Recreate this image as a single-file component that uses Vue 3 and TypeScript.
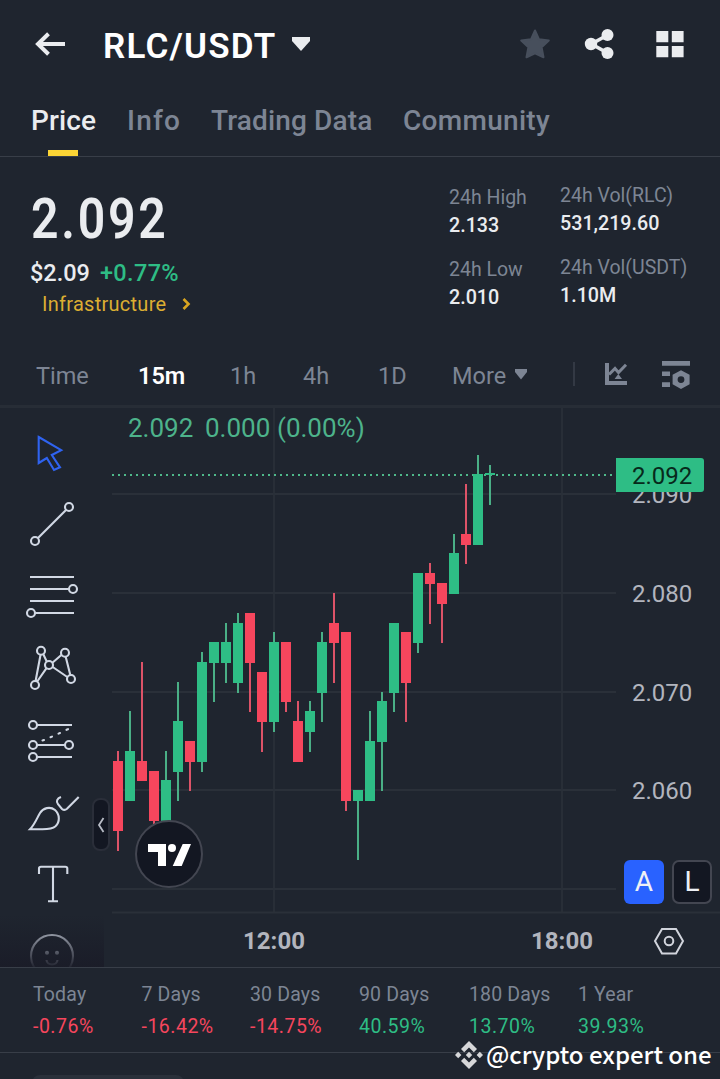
<script setup lang="ts">
interface Candle { x: number; top: number; height: number; wickTop: number; wickHeight: number; up: boolean }

const tabs: string[] = ['Price', 'Info', 'Trading Data', 'Community']
const intervals: string[] = ['Time', '15m', '1h', '4h', '1D']

const stats: { label: string; value: string }[][] = [
  [{ label: '24h High', value: '2.133' }, { label: '24h Low', value: '2.010' }],
  [{ label: '24h Vol(RLC)', value: '531,219.60' }, { label: '24h Vol(USDT)', value: '1.10M' }],
]

const performance: { label: string; value: string }[] = [
  { label: 'Today', value: '-0.76%' },
  { label: '7 Days', value: '-16.42%' },
  { label: '30 Days', value: '-14.75%' },
  { label: '90 Days', value: '40.59%' },
  { label: '180 Days', value: '13.70%' },
  { label: '1 Year', value: '39.93%' },
]

// open, high, low, close in thousandths above 2.000
const ohlc: [number, number, number, number][] = [
  [63, 64, 54, 56], [59, 68, 59, 64], [63, 73, 61, 61], [62, 62, 56, 57],
  [57, 64, 57, 61], [62, 71, 59, 67], [65, 65, 60, 63], [63, 74, 62, 73],
  [73, 75, 69, 75], [73, 77, 71, 75], [71, 78, 70, 77], [78, 78, 68, 73],
  [72, 72, 64, 67], [67, 76, 66, 75], [75, 75, 68, 69], [67, 69, 63, 63],
  [66, 69, 64, 68], [70, 76, 67, 75], [77, 80, 71, 75], [76, 76, 58, 59],
  [59, 60, 53, 60], [59, 68, 59, 65], [65, 70, 60, 69], [70, 77, 68, 77],
  [76, 76, 67, 71], [75, 82, 74, 82], [82, 83, 77, 81], [81, 81, 75, 79],
  [80, 86, 80, 84], [86, 91, 83, 85], [85, 94, 85, 92], [92, 93, 89, 92],
]

const priceY = (p: number): number => Math.round(494.2 + (90 - p) * 9.87)

const candles: Candle[] = ohlc.map(([open, high, low, close], i) => {
  const top = priceY(Math.max(open, close))
  const bottom = priceY(Math.min(open, close)) + 1
  const wickTop = priceY(high)
  return {
    x: 118 + i * 12,
    top: open === close ? top - 1 : top,
    height: Math.max(bottom - top, 2),
    wickTop,
    wickHeight: priceY(low) + 1 - wickTop,
    up: close >= open,
  }
})

const priceLabels: { text: string; y: number }[] = [
  { text: '2.090', y: 503 },
  { text: '2.080', y: 602 },
  { text: '2.070', y: 701 },
  { text: '2.060', y: 799 },
]
const gridRows: number[] = [494, 593, 692, 790, 889]
const gridCols: number[] = [274, 562]
</script>

<template>
  <main class="screen">
    <header class="topbar">
      <svg class="back" width="32" height="24" viewBox="0 0 32 24">
        <path d="M31 12H4M14.5 1.8L4 12L14.5 22.2" fill="none" stroke="#eaecef" stroke-width="4" />
      </svg>
      <h1>RLC/USDT</h1>
      <svg class="caret" width="18" height="14" viewBox="0 0 18 14"><path d="M0 0H18V4L9 14L0 4Z" fill="#eaecef" /></svg>
      <div class="actions">
        <svg width="32" height="32" viewBox="0 0 32 32">
          <path d="M16 2.5L20 11.3L29.8 12.5L22.6 19.2L24.5 29.3L16 25.3L7.5 29.3L9.4 19.2L2.2 12.5L12 11.3Z" fill="#474f5c" stroke="#474f5c" stroke-width="2" stroke-linejoin="round" />
        </svg>
        <svg width="32" height="32" viewBox="0 0 32 32">
          <path d="M24.5 7L8.5 16L24.5 25" fill="none" stroke="#eaecef" stroke-width="3.6" />
          <g fill="#eaecef"><circle cx="24.5" cy="7" r="6" /><circle cx="8" cy="16" r="6.2" /><circle cx="24.5" cy="25" r="6" /></g>
        </svg>
        <svg width="32" height="32" viewBox="0 0 32 32">
          <path d="M2.3 3H14.3V14.3H2.3ZM17.8 3H29.6V14.3H17.8ZM2.3 18H14.3V29.3H2.3ZM17.8 18H29.6V29.3H17.8Z" fill="#eaecef" />
        </svg>
      </div>
    </header>

    <nav class="tabs">
      <span v-for="(tab, i) in tabs" :key="tab" class="tab" :class="{ active: i === 0 }">{{ tab }}</span>
    </nav>

    <section class="ticker">
      <div class="quote">
        <div class="last">2.092</div>
        <div class="fiat"><span>$2.09</span><span class="gain">+0.77%</span></div>
        <div class="tag">
          <span>Infrastructure</span>
          <svg width="9" height="14" viewBox="0 0 9 14"><path d="M1.5 2L6.5 7L1.5 12" fill="none" stroke="#d9a520" stroke-width="2.6" /></svg>
        </div>
      </div>
      <div v-for="(column, c) in stats" :key="c" class="stats">
        <div v-for="stat in column" :key="stat.label" class="stat">
          <span class="muted">{{ stat.label }}</span>
          <span class="value">{{ stat.value }}</span>
        </div>
      </div>
    </section>

    <section class="intervals">
      <span v-for="item in intervals" :key="item" :class="{ active: item === '15m' }">{{ item }}</span>
      <span class="more">More
        <svg width="12" height="11" viewBox="0 0 12 11"><path d="M0 0H12V3L6 10.5L0 3Z" fill="#7d8594" /></svg>
      </span>
      <i class="divider"></i>
      <svg class="indicator" width="24" height="24" viewBox="0 0 24 24">
        <path d="M3 1V21H23" fill="none" stroke="#7d8594" stroke-width="4" />
        <path d="M5 12.5L11 6.5L14.5 10.5L22 2.8" fill="none" stroke="#7d8594" stroke-width="3" />
        <path d="M14.3 12L18 17H10.6Z" fill="#7d8594" />
      </svg>
      <svg class="config" width="28" height="28" viewBox="0 0 28 28">
        <path d="M0 0H28V4.7H0ZM0 10.5H8V15H0ZM0 21.3H8V26H0Z" fill="#7d8594" />
        <path d="M19 9.2L27.6 13.8V23.2L19 28L10.6 23.2V13.8ZM19 15.2A3.4 3.4 0 1 0 19 22A3.4 3.4 0 1 0 19 15.2Z" fill="#7d8594" fill-rule="evenodd" />
      </svg>
    </section>

    <section class="chart">
      <aside class="tools">
        <svg viewBox="0 0 104 72" class="selected"><path d="M38.7 21L61.2 34.2L51.8 39L60 51.3L54 54L46.8 42L38.7 47Z" /></svg>
        <svg viewBox="0 0 104 72"><path d="M66 22L38 50" /><circle cx="69" cy="19" r="4" /><circle cx="35" cy="53" r="4" /></svg>
        <svg viewBox="0 0 104 72"><path d="M30 17H74M30 29H69M30 41H74M35 53H74" /><circle cx="73" cy="29" r="4" /><circle cx="31" cy="53" r="4" /></svg>
        <svg viewBox="0 0 104 72">
          <path d="M40.5 23L35.6 49M43.3 22.2L46.8 29.6M37.2 49.5L46.5 36.2M52.4 30.8L61.6 22.8M52.7 35L67.3 45M65.7 24.7L70.3 43" />
          <circle cx="41" cy="18.7" r="4" /><circle cx="65" cy="20.7" r="4" /><circle cx="49" cy="33" r="4" /><circle cx="35" cy="53" r="4" /><circle cx="71" cy="47" r="4" />
        </svg>
        <svg viewBox="0 0 104 72">
          <path d="M37 21H72M37 41H65M37 53H72" />
          <circle cx="33" cy="21" r="4" /><circle cx="33" cy="41" r="4" /><circle cx="69" cy="41" r="4" /><circle cx="33" cy="53" r="4" />
          <path d="M42.5 36.5L44 36M50.5 33.2L52 32.6M58.5 29.6L60 29M66.5 25.8L68 25.2" stroke-linecap="round" />
        </svg>
        <svg viewBox="0 0 104 72">
          <path d="M30 53.3C35 48 37 42 40 37C43 32 50 30 55 34C60 38.5 60 46 55.5 50.3C52 53.4 47 53.3 42 53.3Z" />
          <path d="M61 21C57 22.5 55.8 25.5 58 28.2L62 33Q64.5 35 67 32.8L78.7 21" />
        </svg>
        <svg viewBox="0 0 104 72"><path d="M39 26V20.5Q39 18.7 41 18.7H65.3Q67.3 18.7 67.3 20.5V26M53 18.7V53M48 53.3H58" /></svg>
        <svg viewBox="0 0 104 72">
          <circle cx="52" cy="36" r="21" /><path d="M46.5 40Q47 44.5 52 44.5Q57 44.5 57.5 40" />
          <circle cx="47" cy="32.7" r="1" /><circle cx="57" cy="32.7" r="1" />
        </svg>
      </aside>

      <svg class="plot" width="616" height="559" viewBox="104 408 616 559">
        <g stroke="#2a3039" stroke-width="1.8">
          <line v-for="y in gridRows" :key="y" x1="112" x2="616" :y1="y" :y2="y" />
          <line v-for="x in gridCols" :key="x" :x1="x" :x2="x" y1="405" y2="912" />
          <line x1="112" x2="720" y1="912.5" y2="912.5" />
        </g>
        <line x1="112" x2="614" y1="475" y2="475" stroke="#4fb98b" stroke-width="2" stroke-dasharray="2 4" />
        <g v-for="candle in candles" :key="candle.x" :class="candle.up ? 'up' : 'down'">
          <rect class="wick" :x="candle.x - 1" :y="candle.wickTop" width="2" :height="candle.wickHeight" />
          <rect :x="candle.x - 5" :y="candle.top" width="10" :height="candle.height" />
        </g>
        <g class="legend">
          <text x="128" y="437">2.092</text>
          <text x="205" y="437">0.000</text>
          <text x="277" y="437">(0.00%)</text>
        </g>
        <g class="axis">
          <text v-for="label in priceLabels" :key="label.text" x="632" :y="label.y">{{ label.text }}</text>
        </g>
        <path d="M616 458H701Q704 458 704 461V489Q704 492 701 492H616Z" fill="#2ebd85" />
        <text class="current" x="632" y="484">2.092</text>
        <g class="time">
          <text x="274" y="949">12:00</text>
          <text x="562" y="949">18:00</text>
        </g>
        <rect x="624" y="860" width="40" height="44" rx="6" fill="#2962ff" />
        <rect x="673" y="861" width="38" height="42" rx="6" fill="#131722" stroke="#434651" stroke-width="2" />
        <g class="mode"><text x="644" y="891">A</text><text x="692" y="891">L</text></g>
        <g fill="none" stroke="#d1d4dc" stroke-width="2">
          <path d="M655 941L662 929H676L683 941L676 953.5H662Z" /><circle cx="669" cy="941" r="4.3" />
        </g>
        <circle cx="169" cy="854" r="33" fill="#131722" stroke="#434651" stroke-width="2" />
        <path d="M148 844H166V866H158V852H148ZM182.7 844H191L181.7 866H172.7Z" fill="#fff" />
        <circle cx="172" cy="848" r="4" fill="#fff" />
      </svg>

      <button class="collapse" aria-label="Collapse tools">
        <svg width="8" height="16" viewBox="0 0 8 16"><path d="M6.5 1L2 8L6.5 15" fill="none" stroke="#b8bcc6" stroke-width="1.8" /></svg>
      </button>
    </section>

    <section class="performance">
      <div v-for="item in performance" :key="item.label">
        <span class="muted">{{ item.label }}</span>
        <span :class="item.value.startsWith('-') ? 'loss' : 'gain'">{{ item.value }}</span>
      </div>
    </section>

    <footer><i></i></footer>

    <div class="watermark">
      <svg width="28" height="28" viewBox="0 0 28 28" fill="#d6d7d9">
        <path d="M14 0L22 8L18.8 11.2L14 6.4L9.2 11.2L6 8ZM14 28L22 20L18.8 16.8L14 21.6L9.2 16.8L6 20ZM0 14L3.2 10.8L6.4 14L3.2 17.2ZM28 14L24.8 10.8L21.6 14L24.8 17.2ZM14 10.8L17.2 14L14 17.2L10.8 14Z" />
      </svg>
      <span>@crypto expert one</span>
    </div>
  </main>
</template>

<style>
body { margin: 0; background: #1f252f; }
</style>

<style scoped>
.screen { position: relative; width: 720px; height: 1079px; overflow: hidden; background: #1f252f; color: #eaecef; font-family: Roboto, "Liberation Sans", sans-serif; }
svg { display: block; flex: none; }
.muted { color: #7d8594; }
.gain { color: #2ebd85; }
.loss { color: #f6465d; }

.topbar { height: 88px; display: flex; align-items: center; padding: 0 34px; box-sizing: border-box; }
.topbar h1 { margin: 6px 0 0 37px; width: 173px; font-size: 35px; font-weight: 600; line-height: 40px; letter-spacing: 1.2px; color: #fff; white-space: nowrap; }
.caret { margin-left: 16px; }
.actions { margin-left: auto; display: grid; grid-template-columns: 64px 71px 32px; }

.tabs { height: 69px; box-sizing: border-box; padding: 19px 31px 0; border-bottom: 1px solid #383e48; display: grid; grid-template-columns: 96px 84px 192px auto; font-size: 28px; line-height: 28px; font-weight: 500; letter-spacing: 0.15px; color: #7d8594; }
.tab { display: flex; flex-direction: column; justify-content: space-between; white-space: nowrap; }
.tab:nth-child(2) { letter-spacing: 1.2px; }
.tab:nth-child(4) { letter-spacing: 0.3px; }
.tab.active { color: #eaecef; }
.tab.active::after { content: ""; width: 30px; height: 6px; margin-left: 17px; background: #fcd535; }

.ticker { height: 183px; display: grid; grid-template-columns: 417px 112px auto; padding-left: 32px; }
.quote { padding-top: 32px; }
.last { width: 160px; font-size: 56px; line-height: 61px; height: 60px; font-weight: 600; letter-spacing: 3.2px; margin-left: -1px; transform: scaleX(0.86); transform-origin: left center; }
.fiat { margin-top: 9px; display: flex; gap: 10px; font-size: 23.5px; line-height: 30px; font-weight: 500; margin-left: -2px; }
.fiat .gain { letter-spacing: 0.35px; }
.tag { margin: 4px 0 0 10px; display: flex; align-items: center; gap: 16px; font-size: 20px; line-height: 24px; letter-spacing: 0.27px; color: #dcae32; }
.stats { padding-top: 27px; display: flex; flex-direction: column; gap: 17px; font-size: 19.5px; line-height: 28px; white-space: nowrap; }
.stats + .stats { padding-top: 25px; margin-left: -1px; }
.stat { display: flex; flex-direction: column; }
.value { font-size: 19.7px; line-height: 27px; font-weight: 500; }

.intervals { height: 68px; box-sizing: border-box; padding: 6px 0 0 36px; border-bottom: 3px solid #272d36; display: grid; grid-template-columns: 102px 92px 73px 75px 74px 121px 31px 58px 28px; align-items: center; font-size: 23.5px; line-height: 28px; color: #7d8594; }
.intervals .active { color: #fff; font-weight: 600; }
.indicator { margin-top: -3px; }
.config { margin-top: -2px; }
.more { display: flex; align-items: center; gap: 9px; }
.more svg { margin-top: -3px; }
.divider { width: 2px; height: 24px; background: #333944; margin-top: -3px; }

.chart { position: relative; height: 559px; display: flex; border-bottom: 1px solid #383e48; }
.tools { position: relative; width: 104px; height: 559px; box-sizing: border-box; padding-top: 8px; overflow: hidden; display: flex; flex-direction: column; }
.tools svg { width: 104px; height: 72px; fill: none; stroke: #d1d8e4; stroke-width: 2.1; }
.tools .selected { stroke: #2f63f0; }
.tools::after { content: ""; position: absolute; left: 0; right: 0; bottom: 0; height: 52px; background: linear-gradient(rgba(26, 28, 40, 0), rgba(26, 28, 40, 0.95)); }
.collapse { position: absolute; left: 92px; top: 390px; width: 18px; height: 53px; padding: 0; box-sizing: border-box; border: 2px solid #2a2e39; border-radius: 8px; background: #131722; display: flex; align-items: center; justify-content: center; }

.up { fill: #2ebd85; }
.down { fill: #f6465d; }
.up .wick { fill: #4aaf86; }
.down .wick { fill: #dd5368; }
.legend { font-size: 26px; fill: #4db38b; }
.axis { font-size: 24px; fill: #b2b5be; }
.current { font-size: 24px; fill: #07291b; }
.time { font-size: 24px; font-weight: 700; fill: #b2b5be; text-anchor: middle; }
.mode { font-size: 28px; fill: #eef0f5; text-anchor: middle; }

.performance { height: 85px; box-sizing: border-box; padding: 11px 0 0 33px; border-bottom: 1px solid #383e48; display: grid; grid-template-columns: 108.5px 108.5px 109px 110px 109px auto; font-size: 19.5px; line-height: 32px; letter-spacing: 0.15px; white-space: nowrap; }
.performance div { display: flex; flex-direction: column; }
.performance .gain, .performance .loss { letter-spacing: 0.5px; }

footer { padding: 22px 0 0 32px; }
footer i { display: block; width: 152px; height: 24px; border-radius: 8px; background: #2a303a; }

.watermark { position: absolute; left: 455px; top: 1041px; display: flex; align-items: center; gap: 3px; font-family: "Noto Sans CJK SC", "Noto Sans", sans-serif; font-size: 24px; line-height: 28px; font-weight: 500; color: #fff; white-space: nowrap; }
.watermark span { margin-top: -2px; }
</style>
